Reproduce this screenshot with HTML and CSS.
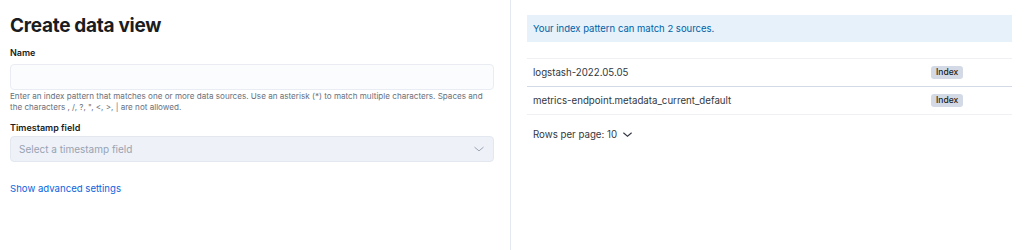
FILE: index.html
```html
<!DOCTYPE html>
<html lang="en">
<head>
  <meta charset="UTF-8" />
  <meta name="viewport" content="width=device-width, initial-scale=1.0"/>
  <title>Create data view</title>
  <link rel="stylesheet" href="styles.css">
</head>
<body>
  <div class="layout">
    <section class="form-panel">
      <h1>Create data view</h1>

      <label class="field-label">Name</label>
      <input class="text-input" type="text" />
      <p class="help">Enter an index pattern that matches one or more data sources. Use an asterisk (*) to match multiple characters. Spaces and the characters , /, ?, ", &lt;, &gt;, | are not allowed.</p>

      <label class="field-label ts-label">Timestamp field</label>
      <div class="select">
        <span>Select a timestamp field</span>
        <svg width="12" height="12" viewBox="0 0 16 16"><path d="M2 5.5l6 5 6-5" fill="none" stroke="#98a2b3" stroke-width="1.3"/></svg>
      </div>

      <a class="link" href="#">Show advanced settings</a>
    </section>

    <section class="preview-panel">
      <div class="callout">Your index pattern can match 2 sources.</div>

      <table class="sources">
        <tbody>
          <tr><td>logstash-2022.05.05</td><td class="tag-cell"><span class="badge">Index</span></td></tr>
          <tr><td>metrics-endpoint.metadata_current_default</td><td class="tag-cell"><span class="badge">Index</span></td></tr>
        </tbody>
      </table>

      <div class="pager">
        Rows per page: 10
        <svg width="11" height="11" viewBox="0 0 16 16"><path d="M2 5.5l6 5 6-5" fill="none" stroke="#343741" stroke-width="1.6"/></svg>
      </div>
    </section>
  </div>
</body>
</html>
```

FILE: styles.css
```css
body {
  margin: 0;
  font-family: Inter, "Noto Sans", sans-serif;
  color: #343741;
  background: #fff;
}

.layout {
  display: flex;
  height: 250px;
}

.form-panel {
  width: 484px;
  padding: 0 16px 0 10px;
  display: flex;
  flex-direction: column;
}

h1 {
  margin: 14px 0 0;
  font-size: 19px;
  line-height: 24px;
  font-weight: 700;
  letter-spacing: -0.3px;
  color: #1a1c21;
}

.field-label {
  display: block;
  margin-top: 9px;
  font-size: 9px;
  line-height: 12px;
  font-weight: 600;
  color: #1a1c21;
}

.text-input {
  box-sizing: border-box;
  width: 100%;
  height: 26px;
  margin-top: 5px;
  border: 1px solid #e9edf3;
  border-radius: 4px;
  background: #fbfcfd;
}

.help {
  margin: 1px 0 0;
  font-size: 8.1px;
  line-height: 11px;
  color: #69707d;
}

.ts-label {
  margin-top: 9px;
}

.select {
  box-sizing: border-box;
  height: 26px;
  margin-top: 2px;
  padding: 0 8px;
  display: flex;
  align-items: center;
  justify-content: space-between;
  border: 1px solid #e3e8f0;
  border-radius: 4px;
  background: #eef1f7;
  font-size: 10px;
  color: #98a2b3;
}

.link {
  margin-top: 20px;
  font-size: 9.6px;
  line-height: 14px;
  color: #0b64dd;
  text-decoration: none;
  align-self: flex-start;
}

.preview-panel {
  flex: 1;
  border-left: 1px solid #e3e8f2;
  padding: 15px 15px 0 16px;
}

.callout {
  height: 27px;
  padding: 0 6px;
  display: flex;
  align-items: center;
  background: #e6f1fa;
  color: #0061a6;
  font-size: 9.5px;
}

.sources {
  width: 100%;
  margin-top: 16px;
  border-collapse: collapse;
  border-top: 1px solid #eef0f4;
}

.sources td {
  height: 27px;
  padding: 0 6px;
  border-bottom: 1px solid #d3dae6;
  font-size: 9.7px;
  color: #343741;
}

.sources tr:last-child td {
  border-bottom-color: #eef0f4;
}

.tag-cell {
  width: 75px;
}

.badge {
  display: inline-block;
  padding: 0 5px;
  line-height: 13px;
  border-radius: 3px;
  background: #d3dae6;
  font-size: 8.5px;
  font-weight: 500;
  color: #1a1c21;
}

.pager {
  margin-top: 14px;
  padding-left: 6px;
  display: flex;
  align-items: center;
  gap: 5px;
  font-size: 9.7px;
  color: #343741;
}
```
